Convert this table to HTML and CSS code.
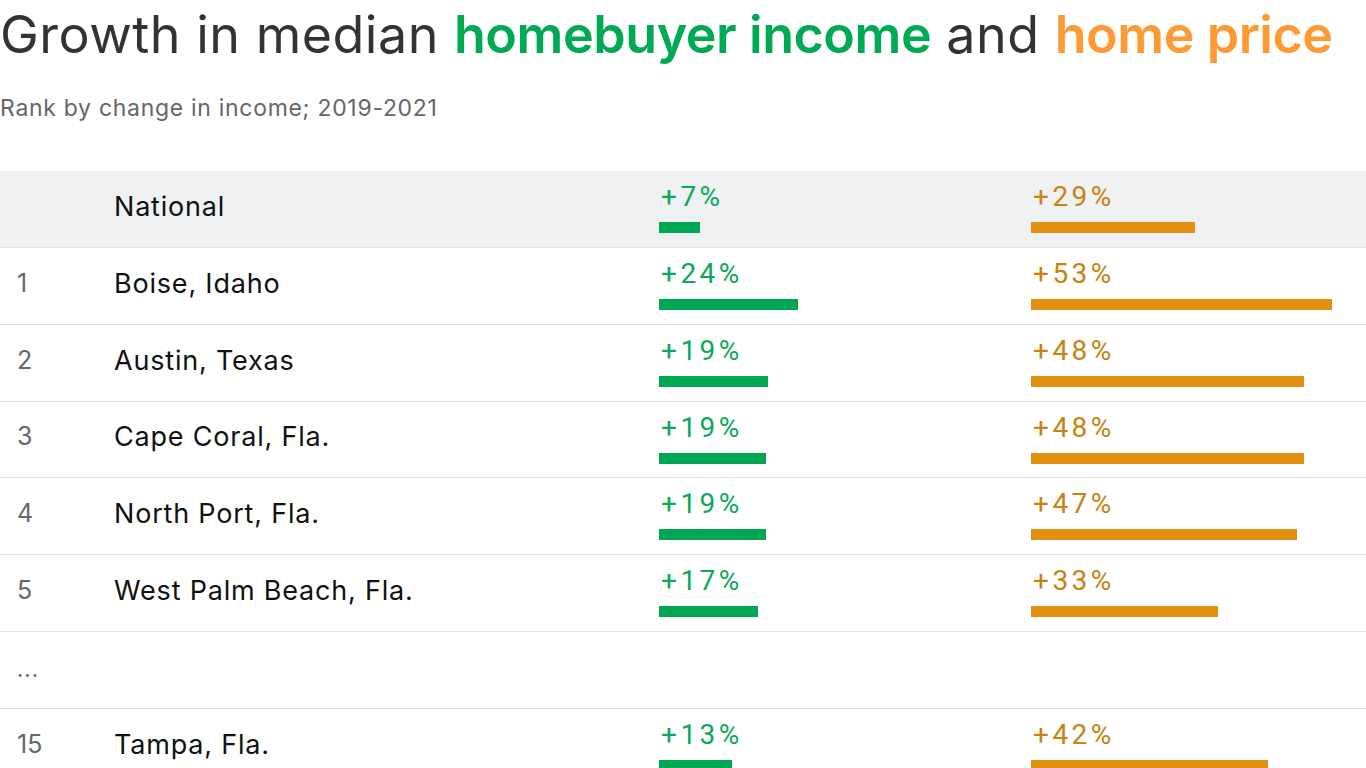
FILE: index.html
```html
<!DOCTYPE html>
<html>
<head>
<meta charset="utf-8">
<link rel="stylesheet" href="styles.css">
</head>
<body>
<div class="page">
  <h1 class="title">Growth in median <span class="g">homebuyer income</span> and <span class="o">home price</span></h1>
  <p class="sub">Rank by change in income; 2019-2021</p>
  <div class="table">
    <div class="row nat">
      <div class="rank"></div>
      <div class="name">National</div>
      <div class="cell inc"><span class="pct">+7%</span><span class="bar" style="width:41px"></span></div>
      <div class="cell pri"><span class="pct">+29%</span><span class="bar" style="width:164px"></span></div>
    </div>
    <div class="row">
      <div class="rank">1</div>
      <div class="name">Boise, Idaho</div>
      <div class="cell inc"><span class="pct">+24%</span><span class="bar" style="width:139px"></span></div>
      <div class="cell pri"><span class="pct">+53%</span><span class="bar" style="width:301px"></span></div>
    </div>
    <div class="row">
      <div class="rank">2</div>
      <div class="name">Austin, Texas</div>
      <div class="cell inc"><span class="pct">+19%</span><span class="bar" style="width:109px"></span></div>
      <div class="cell pri"><span class="pct">+48%</span><span class="bar" style="width:273px"></span></div>
    </div>
    <div class="row">
      <div class="rank">3</div>
      <div class="name">Cape Coral, Fla.</div>
      <div class="cell inc"><span class="pct">+19%</span><span class="bar" style="width:107px"></span></div>
      <div class="cell pri"><span class="pct">+48%</span><span class="bar" style="width:273px"></span></div>
    </div>
    <div class="row">
      <div class="rank">4</div>
      <div class="name">North Port, Fla.</div>
      <div class="cell inc"><span class="pct">+19%</span><span class="bar" style="width:107px"></span></div>
      <div class="cell pri"><span class="pct">+47%</span><span class="bar" style="width:266px"></span></div>
    </div>
    <div class="row">
      <div class="rank">5</div>
      <div class="name">West Palm Beach, Fla.</div>
      <div class="cell inc"><span class="pct">+17%</span><span class="bar" style="width:99px"></span></div>
      <div class="cell pri"><span class="pct">+33%</span><span class="bar" style="width:187px"></span></div>
    </div>
    <div class="row gap">
      <div class="rank dots">...</div>
      <div class="name"></div>
      <div class="cell inc"></div>
      <div class="cell pri"></div>
    </div>
    <div class="row">
      <div class="rank">15</div>
      <div class="name">Tampa, Fla.</div>
      <div class="cell inc"><span class="pct">+13%</span><span class="bar" style="width:73px"></span></div>
      <div class="cell pri"><span class="pct">+42%</span><span class="bar" style="width:237px"></span></div>
    </div>
  </div>
</div>
</body>
</html>
```
FILE: styles.css
```css
html, body {
  margin: 0;
  padding: 0;
  background: #ffffff;
}
body {
  font-family: Inter, "Liberation Sans", sans-serif;
  overflow: hidden;
  width: 1366px;
  height: 768px;
}
.page {
  display: flex;
  flex-direction: column;
}
.title {
  margin: 9px 0 0 0;
  font-size: 52px;
  line-height: 52px;
  font-weight: 400;
  color: #333333;
  letter-spacing: 0.5px;
  white-space: nowrap;
}
.title .g {
  color: #00aa55;
  font-weight: 600;
  letter-spacing: -0.45px;
}
.title .o {
  color: #ff9933;
  font-weight: 600;
  letter-spacing: -0.45px;
}
.sub {
  margin: 34px 0 0 0;
  font-size: 23px;
  line-height: 26px;
  letter-spacing: 0.7px;
  color: #666666;
}
.table {
  margin-top: 50px;
  display: flex;
  flex-direction: column;
}
.row {
  display: grid;
  grid-template-columns: 114px 545px 372px 1fr;
  height: 75.85px;
  border-bottom: 1px solid #e2e2e2;
  align-items: center;
}
.row.nat {
  background: #f0f1f3;
}
.rank {
  padding-left: 17px;
  padding-bottom: 6px;
  font-size: 25px;
  color: #666666;
}
.dots {
  font-size: 22px;
  letter-spacing: 1px;
  padding-bottom: 2px;
}
.name {
  font-size: 27px;
  letter-spacing: 0.8px;
  padding-bottom: 5px;
  color: #111111;
}
.cell {
  align-self: start;
  display: flex;
  flex-direction: column;
  align-items: flex-start;
  gap: 11px;
  padding-top: 12px;
}
.pct {
  font-family: Roboto, "Liberation Sans", sans-serif;
  font-size: 28px;
  line-height: 28px;
  letter-spacing: 3.5px;
  padding-left: 2px;
}
.bar {
  display: block;
  height: 11px;
}
.inc .pct { color: #0aa858; }
.inc .bar { background: #00a651; }
.pri .pct { color: #c9820f; }
.pri .bar { background: #e29010; }
```
